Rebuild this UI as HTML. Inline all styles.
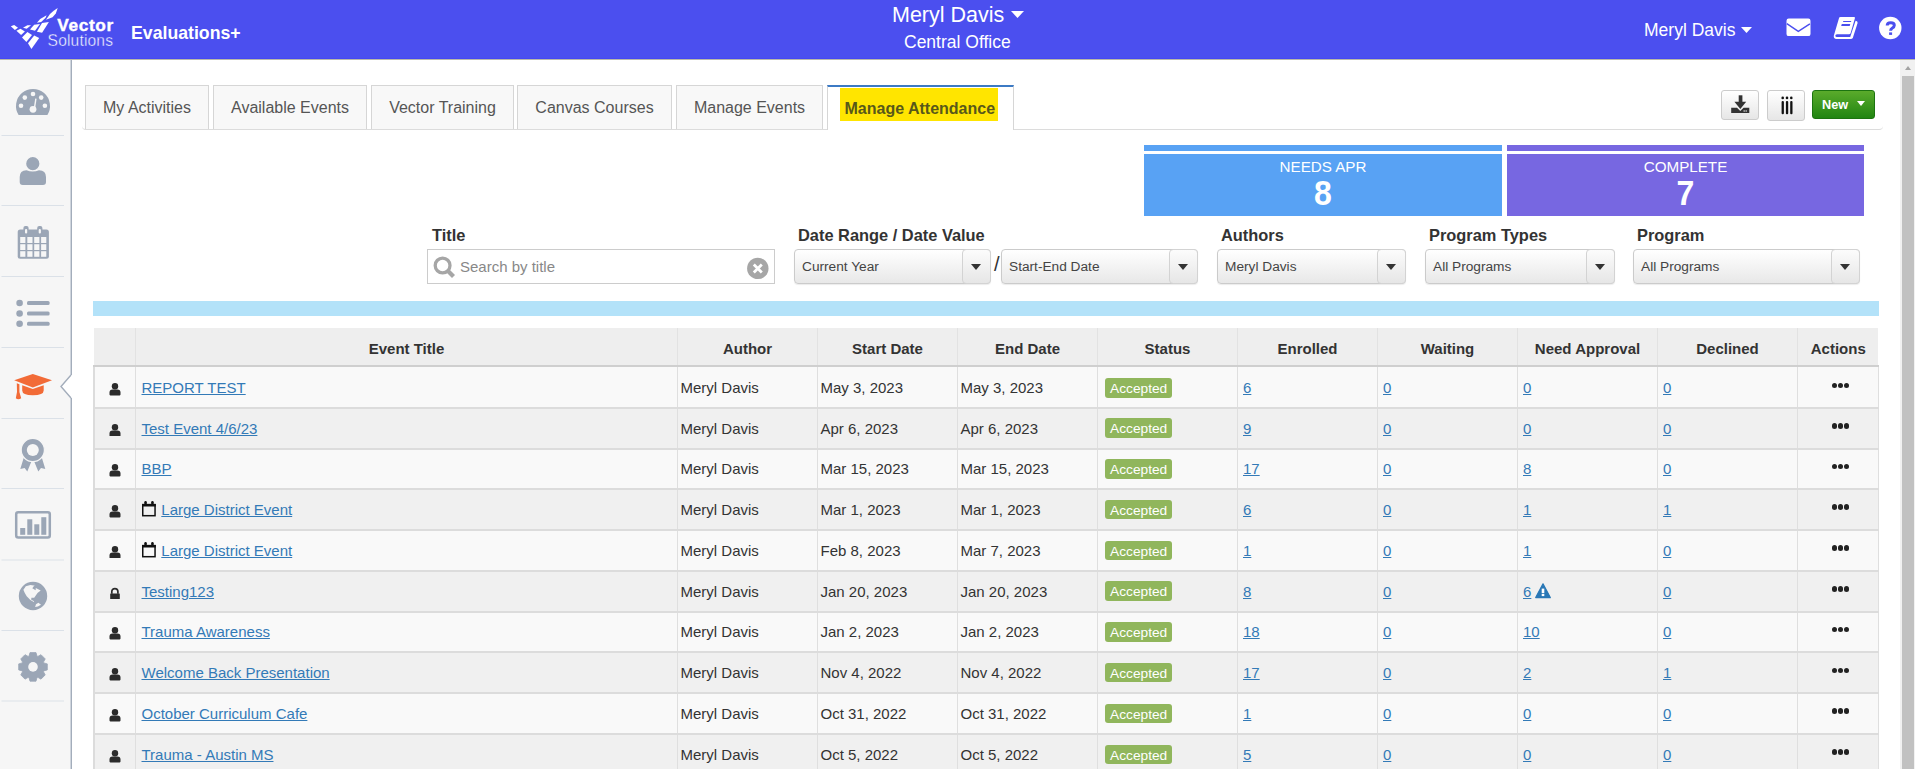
<!DOCTYPE html>
<html><head><meta charset="utf-8">
<style>
*{box-sizing:border-box;margin:0;padding:0}
html,body{width:1915px;height:769px;overflow:hidden;background:#fff;font-family:"Liberation Sans",sans-serif;color:#333}
#hdr{position:absolute;left:0;top:0;width:1915px;height:60px;background:#4b4fef;color:#fff;box-shadow:inset 0 -1px 0 #b9b8aa,inset 0 -2px 0 #4447f5}
#hdr .app{position:absolute;left:131px;top:23.3px;font-size:17.7px;font-weight:bold;white-space:nowrap}
#hdr .cu{position:absolute;left:892px;top:3px;font-size:21.5px;white-space:nowrap}
#hdr .co{position:absolute;left:904px;top:32px;font-size:17.5px;white-space:nowrap}
#hdr .ru{position:absolute;left:1644px;top:20px;font-size:17.5px;white-space:nowrap}
#hdr svg{position:absolute}
#side{position:absolute;left:0;top:60px;width:72px;height:709px;background:#f6f6f6;box-shadow:inset -1px 0 0 #a3adbb,inset -2px 0 0 #cfd5dd}
#side .sep{position:absolute;left:4px;width:60px;height:1px;background:#dde2e8}
#side svg{position:absolute}
#scroll{position:absolute;left:1900px;top:60px;width:15px;height:709px;background:#f1f1f1}
#scroll .thumb{position:absolute;left:2px;top:16px;width:12px;height:693px;background:#c1c1c1}
#scroll .up{position:absolute;left:5px;top:6px;border-left:3px solid transparent;border-right:3px solid transparent;border-bottom:4px solid #a3a3a3}
.tabs{position:absolute;left:82px;top:85px;width:1801px;height:45px;border-bottom:1px solid #dcdcdc;border-bottom-left-radius:4px;border-bottom-right-radius:4px}
.tab{position:absolute;top:0;height:44px;border:1px solid #d6d6d6;border-bottom:none;background:#f8f8f8;font-size:16px;color:#555;padding-top:13px;text-align:center;white-space:nowrap;line-height:18px}
.tab.act{background:#fff;border:1px solid #d6d6d6;border-top:2px solid #3c7ac4;border-bottom:none;height:45px;color:#58581a;font-weight:bold;padding-top:11px}
.tab.act span{position:absolute;left:12px;top:1px;width:158px;height:33px;background:#ffe500;line-height:18px;padding:11.5px 0 0 4.5px;text-align:left}
.btn{position:absolute;top:90px;height:30px;border:1px solid #ccc;border-radius:3px;background:linear-gradient(#fff,#e6e6e6)}
.btn svg{position:absolute}
.new{position:absolute;left:1812px;top:90px;width:63px;height:29px;border-radius:3px;background:linear-gradient(#5aab2b,#218512);border:1px solid #1c7410;color:#fff;font-weight:bold;font-size:12.7px}
.new span{position:absolute;left:9px;top:6.5px}
.new i{position:absolute;left:44px;top:10px;border-left:4.7px solid transparent;border-right:4.7px solid transparent;border-top:5px solid #fff}
.stat{position:absolute;top:145px;height:71px;color:#fff;text-align:center}
.stat .strip{position:absolute;left:0;top:0;width:100%;height:6px}
.stat .body{position:absolute;left:0;top:9px;width:100%;height:62px}
.stat .lbl{position:absolute;left:0;top:4.1px;width:100%;font-size:15.2px}
.stat .num{position:absolute;left:0;top:18.6px;width:100%;font-size:32px;font-weight:bold;transform:scaleY(1.12);transform-origin:50% 7px}
.flbl{position:absolute;top:226px;font-size:16.4px;font-weight:bold;color:#333;white-space:nowrap}
.inp{position:absolute;top:249px;height:35px;border:1px solid #ccc;background:#fff;font-size:15px;color:#888}
.inp svg{position:absolute}
.inp span{position:absolute;left:32px;top:7.6px}
.sel{position:absolute;top:249px;height:35px;border:1px solid #cbcbcb;border-radius:4px;background:linear-gradient(#fff,#e8e8e8);font-size:13.7px;color:#444;white-space:nowrap;box-shadow:0 1px 1px rgba(0,0,0,0.08)}
.sel span{position:absolute;left:7px;top:9px}
.sel .dd{position:absolute;right:-1px;top:-1px;width:29px;height:35px;border:1px solid #d3d3d3;border-radius:4px;background:linear-gradient(#fcfcfc,#e6e6e6)}
.sel .dd:after{content:"";position:absolute;left:7.5px;top:14px;border-left:5.8px solid transparent;border-right:5.8px solid transparent;border-top:6.8px solid #333}
.slash{position:absolute;left:994px;top:252.5px;font-size:20px;color:#333}
.bar{position:absolute;left:93px;top:301px;width:1786px;height:15px;background:#b3e2f9}
table{position:absolute;left:93px;top:328px;border-collapse:collapse;table-layout:fixed;width:1784px;font-size:15px}
th{height:38px;background:#eeeeee;font-weight:bold;color:#333;border-left:1px solid #e2e2e2;border-bottom:2px solid #cfcfcf;text-align:center;padding:3px 0 0 1px}
td{height:40.78px;border:1px solid #dfdfdf;border-top:2px solid #dcdcdc;padding:0 0 0 3px;white-space:nowrap}
td:first-child{border-left:2px solid #dcdcdc}
tr.o td{background:#f9f9f9}
tr.e td{background:#f0f0f0}
td a{color:#337ab7;text-decoration:underline}
.acc{display:inline-block;background:#90b65c;color:#fff;padding:0 5px;border-radius:3px;font-size:13.7px;line-height:19.5px;margin-left:4px}
.acc b{font-weight:normal;position:relative;top:1px;left:0.6px}
td.ic{text-align:center;padding:0}
td.tt{padding-left:6px}
td.ac{text-align:center;padding:0 0 0 6px}
.dots i{display:inline-block;width:5.7px;height:5.7px;border-radius:50%;background:#222;margin:0 0.1px;vertical-align:5px}
tr.r1 td{height:41.78px;padding-top:2px}
td.n{padding-left:5.5px}
tr.r1 td.ic{padding-top:2px}
.ri{display:block;margin-left:auto;margin-right:auto}

</style></head><body>
<div id="hdr">
  <svg style="left:0;top:0" width="130" height="59" viewBox="0 0 130 59">
    <g fill="#fff">
      <polygon points="10.8,26.2 14.2,24.9 18,27.7 14.9,29.9"/>
      <polygon points="16.4,30.8 20.5,28.7 24.9,31.5 21.1,34.9"/>
      <polygon points="22,37.4 27.4,32.1 32,34.9 26.4,42.1"/>
      <polygon points="28,43.3 34.2,35.5 39.2,38 31.4,48.9"/>
      <polygon points="23,27.7 27.4,25.2 31.1,25.2 26.7,28.7"/>
      <polygon points="30,29.4 34.2,24.8 40,24 35,30.8"/>
      <polygon points="36.9,31.7 42,23.1 48.9,22.1 42.1,32.7"/>
      <polygon points="36.9,22.7 40.2,18.9 46.6,15.2 45.6,17.8 41.2,22"/>
      <polygon points="46,19.8 50,14 53.7,10.7 57.7,8 55.8,13.6 52.5,17.3"/>
    </g>
    <text x="57.3" y="30.8" fill="#fff" stroke="#fff" stroke-width="0.4" font-family="Liberation Sans" font-weight="bold" font-size="17.3" letter-spacing="0.6">Vector</text>
    <text x="47.6" y="45.8" fill="#fff" stroke="#4b4fef" stroke-width="0.4" font-family="Liberation Sans" font-size="15.6" letter-spacing="0.15">Solutions</text>
  </svg>
  <div class="app">Evaluations+</div>
  <div class="cu">Meryl Davis</div>
  <svg style="left:1011px;top:11px" width="13" height="7" viewBox="0 0 13 7"><path d="M0 0H13L6.5 7Z" fill="#fff"/></svg>
  <div class="co">Central Office</div>
  <div class="ru">Meryl Davis</div>
  <svg style="left:1741px;top:27px" width="11" height="6" viewBox="0 0 11 6"><path d="M0 0H11L5.5 6Z" fill="#fff"/></svg>
  <svg style="left:1786px;top:18px" width="25" height="19" viewBox="0 0 25 19">
    <rect x="0.5" y="0.5" width="24" height="17.6" rx="2.2" fill="#fff"/>
    <path d="M0.8 5.6 L12.3 13.4 L23.9 5.8" stroke="#4b4fef" stroke-width="1.4" fill="none"/>
  </svg>
  <svg style="left:1833px;top:16px" width="26" height="24" viewBox="0 0 26 24">
    <path d="M6.2 1.6 Q6.6 0.9 7.5 0.9 H21 Q22.3 0.9 21.9 2.3 L17.6 17.2 Q17.2 18.3 16 18.3 H4 Q2.4 18.5 2.3 19.8 Q2.4 21 3.9 21 H17.2 L22.6 4.8 Q24.9 5.2 24.6 7 L19.8 22 Q19.2 23 17.8 23 H3.4 Q0.4 22.8 0.8 19.8 Z" fill="#fff"/>
    <path d="M10.3 4.9 H18.3 L18 6.1 H10 Z M8.8 7.9 H17.3 L16.7 10 H8.2 Z" fill="#4b4fef"/>
  </svg>
  <svg style="left:1878px;top:16px" width="25" height="25" viewBox="0 0 25 25">
    <circle cx="12.3" cy="12" r="11.2" fill="#fff"/>
    <path d="M9.2 9.6 Q9.2 6.7 12.8 6.7 Q16.3 6.7 16.3 9.3 Q16.3 11 14.4 12 Q12.6 13 12.6 14.8" stroke="#4b4fef" stroke-width="3" fill="none"/>
    <rect x="11.1" y="16.4" width="3" height="2.5" fill="#4b4fef"/>
  </svg>
</div>
<div id="side">
  <svg style="left:0;top:0" width="72" height="709" viewBox="0 60 72 709">
    <g fill="#9ba6b6">
      <path d="M18.6 115 A17 17 0 1 1 47.4 115 Z"/>
      <circle cx="32.8" cy="163.7" r="7.3" stroke="#f6f6f6" stroke-width="1.4"/>
      <path d="M19.7 182 V177 Q19.7 170.5 26.5 170.2 Q32.8 173 39 170.2 Q46 170.5 46 177 V182 Q46 185 43 185 H22.7 Q19.7 185 19.7 182Z"/>
      <rect x="17.7" y="229.5" width="31.2" height="29.3" rx="2.5"/>
      <rect x="23.4" y="226" width="5.2" height="9" rx="2"/>
      <rect x="37.2" y="226" width="5.2" height="9" rx="2"/>
      <circle cx="19.6" cy="303" r="3.3"/><circle cx="19.6" cy="313.5" r="3.3"/><circle cx="19.6" cy="323.7" r="3.3"/>
      <rect x="27" y="301" width="22.6" height="4" rx="1.5"/><rect x="27" y="311.5" width="22.6" height="4" rx="1.5"/><rect x="27" y="321.7" width="22.6" height="4" rx="1.5"/>
      <path d="M23.8 457.5 L31.3 461.8 L27.3 471.5 L24.6 468 L20.3 469 Z"/>
      <path d="M41.8 457.5 L34.3 461.8 L38.3 471.5 L41 468 L45.3 469 Z"/>
      <circle cx="32.8" cy="450" r="11.6" stroke="#f6f6f6" stroke-width="1.2"/>
      <rect x="16.2" y="512.2" width="33.6" height="25.4" rx="2" fill="none" stroke="#9ba6b6" stroke-width="2.5"/>
      <rect x="20.2" y="528" width="5" height="6.8"/><rect x="27.3" y="519.3" width="5" height="15.5"/><rect x="34.3" y="524.3" width="5" height="10.5"/><rect x="41.3" y="517.2" width="5" height="17.6"/>
      <circle cx="33" cy="596" r="14.2"/>
      <path d="M43.80 662.90 L47.30 663.90 L47.30 669.90 L43.80 670.90 L43.47 671.71 L45.23 674.89 L40.99 679.13 L37.81 677.37 L37.00 677.70 L36.00 681.20 L30.00 681.20 L29.00 677.70 L28.19 677.37 L25.01 679.13 L20.77 674.89 L22.53 671.71 L22.20 670.90 L18.70 669.90 L18.70 663.90 L22.20 662.90 L22.53 662.09 L20.77 658.91 L25.01 654.67 L28.19 656.43 L29.00 656.10 L30.00 652.60 L36.00 652.60 L37.00 656.10 L37.81 656.43 L40.99 654.67 L45.23 658.91 L43.47 662.09Z" stroke="#9ba6b6" stroke-width="0.8" stroke-linejoin="round"/>
    </g>
    <g fill="#f6f6f6">
      <circle cx="21" cy="105.8" r="2.3"/><circle cx="24.8" cy="97.6" r="2.3"/><circle cx="33" cy="94" r="2.3"/><circle cx="41.2" cy="97.6" r="2.3"/><circle cx="44.9" cy="105.8" r="2.3"/>
      <circle cx="33" cy="109.3" r="3.4"/>
      <path d="M33.6 109 L35.2 98.5 L36.6 98.7 L35 109.3Z"/>
      <rect x="25" y="229" width="2.2" height="4.5" rx="1"/><rect x="38.7" y="229" width="2.2" height="4.5" rx="1"/>
      <rect x="20.2" y="237" width="5.2" height="6"/><rect x="27.3" y="237" width="5.2" height="6"/><rect x="34.2" y="237" width="5.2" height="6"/><rect x="41.1" y="237" width="5.2" height="6"/>
      <rect x="20.2" y="244.2" width="5.2" height="5.8"/><rect x="27.3" y="244.2" width="5.2" height="5.8"/><rect x="34.2" y="244.2" width="5.2" height="5.8"/><rect x="41.1" y="244.2" width="5.2" height="5.8"/>
      <rect x="20.2" y="251.2" width="5.2" height="5.6"/><rect x="27.3" y="251.2" width="5.2" height="5.6"/><rect x="34.2" y="251.2" width="5.2" height="5.6"/><rect x="41.1" y="251.2" width="5.2" height="5.6"/>
      <circle cx="32.8" cy="450" r="6"/>
      <path d="M23.4 589.7 L25.8 586.2 L30.4 585 L33.7 585.5 L34.7 585 L32.3 588.3 L35.6 590.2 L35.8 588 L40.7 590.4 L37.5 593 L35.6 595.8 L34.2 597.7 L31.4 597.7 L31.2 599.8 L33.7 600.9 L34.2 602.3 L30.4 600 L26.7 596.3 L24.8 593 L23.9 591.1 Z"/>
      <path d="M35.1 607 L36 604.2 L38.4 602.8 L41 604.7 L37.9 606.6 Z"/>
      <circle cx="33" cy="666.9" r="4.8"/>
    </g>
    <g fill="#f26b37">
      <path d="M14.2 380.3 L32.8 373.9 L52 380.3 L32.8 387.5 Z"/>
      <path d="M22.2 385.2 L32.8 389 L43.7 385.2 V390.5 Q43.7 395.2 32.8 395.2 Q22.2 395.2 22.2 390.5 Z"/>
      <path d="M16.8 383.3 L19.4 384.2 V392 L21.2 398.2 Q18.2 400.2 15.8 398.2 L17 392 Z"/>
    </g>
    <g fill="#dbe1e8">
      <rect x="1.5" y="135" width="62.5" height="1"/><rect x="1.5" y="205" width="62.5" height="1"/><rect x="1.5" y="276" width="62.5" height="1"/><rect x="1.5" y="347" width="62.5" height="1"/><rect x="1.5" y="418" width="62.5" height="1"/><rect x="1.5" y="488" width="62.5" height="1"/><rect x="1.5" y="559.5" width="62.5" height="1"/><rect x="1.5" y="630" width="62.5" height="1"/><rect x="1.5" y="700.5" width="62.5" height="1"/>
    </g>
    <path d="M72 375 L71 375 L61 386.5 L71 398 L72 398 Z" fill="#fff"/>
    <path d="M71 375 L61 386.5 L71 398" fill="none" stroke="#a3adbb" stroke-width="1.4"/>
  </svg>
</div>
<div id="scroll"><div class="up"></div><div class="thumb"></div></div>
<div class="tabs">
  <div class="tab" style="left:3px;width:124px">My Activities</div>
  <div class="tab" style="left:131px;width:154px">Available Events</div>
  <div class="tab" style="left:289px;width:143px">Vector Training</div>
  <div class="tab" style="left:435px;width:155px">Canvas Courses</div>
  <div class="tab" style="left:594px;width:147px">Manage Events</div>
  <div class="tab act" style="left:745px;width:187px"><span>Manage Attendance</span></div>
</div>
<div class="btn" style="left:1721px;width:38px;height:30px">
  <svg style="left:8px;top:3px" width="20" height="20" viewBox="1730 94 20 20">
    <rect x="1738.7" y="95.3" width="3.7" height="8" fill="#333"/>
    <path d="M1734.4 101.8 H1746.2 L1740.3 109.1 Z" fill="#333"/>
    <path d="M1731.2 107.8 H1737 L1740.3 111 L1743.6 107.8 H1749.3 V113 H1731.2 Z" fill="#333"/>
    <rect x="1743.5" y="110.5" width="1.4" height="1" fill="#fff"/><rect x="1745.5" y="110.5" width="1.4" height="1" fill="#fff"/>
  </svg>
</div>
<div class="btn" style="left:1767px;width:38px;height:31px">
  <svg style="left:12px;top:5px" width="14" height="21" viewBox="1780 96 14 21">
    <g fill="#111"><circle cx="1782.7" cy="97.9" r="1.3"/><circle cx="1787" cy="97.9" r="1.3"/><circle cx="1791.3" cy="97.9" r="1.3"/>
    <rect x="1781.6" y="101" width="2.3" height="13.3" rx="1"/><rect x="1785.9" y="101" width="2.3" height="13.3" rx="1"/><rect x="1790.2" y="101" width="2.3" height="13.3" rx="1"/></g>
  </svg>
</div>
<div class="new"><span>New</span><i></i></div>
<div class="stat" style="left:1144px;width:358px"><div class="strip" style="background:#58a2f4"></div><div class="body" style="background:#58a2f4"><div class="lbl">NEEDS APR</div><div class="num">8</div></div></div>
<div class="stat" style="left:1507px;width:357px"><div class="strip" style="background:#7767e1"></div><div class="body" style="background:#7767e1"><div class="lbl">COMPLETE</div><div class="num">7</div></div></div>
<div class="flbl" style="left:432px">Title</div>
<div class="flbl" style="left:798px">Date Range / Date Value</div>
<div class="flbl" style="left:1221px">Authors</div>
<div class="flbl" style="left:1429px">Program Types</div>
<div class="flbl" style="left:1637px">Program</div>
<div class="inp" style="left:427px;width:348px">
  <svg style="left:4.2px;top:3.1px" width="26" height="26" viewBox="432 253 26 26">
    <circle cx="442.6" cy="265.5" r="7.4" fill="none" stroke="#a6a6a6" stroke-width="3.3"/>
    <path d="M448 271 L453.5 276.5" stroke="#a6a6a6" stroke-width="4.2"/>
  </svg>
  <span>Search by title</span>
  <svg style="left:318px;top:7px" width="23" height="23" viewBox="746 256 23 23">
    <circle cx="757.8" cy="267.4" r="10.7" fill="#a6a6a6"/>
    <path d="M753.8 263.4 L761.8 271.4 M761.8 263.4 L753.8 271.4" stroke="#fff" stroke-width="2.8"/>
  </svg>
</div>
<div class="sel" style="left:794px;width:197px"><span>Current Year</span><div class="dd"></div></div>
<div class="slash">/</div>
<div class="sel" style="left:1001px;width:197px"><span>Start-End Date</span><div class="dd"></div></div>
<div class="sel" style="left:1217px;width:189px"><span>Meryl Davis</span><div class="dd"></div></div>
<div class="sel" style="left:1425px;width:190px"><span>All Programs</span><div class="dd"></div></div>
<div class="sel" style="left:1633px;width:227px"><span>All Programs</span><div class="dd"></div></div>
<div class="bar"></div>
<table>
<colgroup><col style="width:41px"><col style="width:542px"><col style="width:140px"><col style="width:140px"><col style="width:140px"><col style="width:140px"><col style="width:140px"><col style="width:140px"><col style="width:140px"><col style="width:140px"><col style="width:81px"></colgroup>
<tr><th style="border-left:none"></th><th>Event Title</th><th>Author</th><th>Start Date</th><th>End Date</th><th>Status</th><th>Enrolled</th><th>Waiting</th><th>Need Approval</th><th>Declined</th><th>Actions</th></tr>
<tr class="o r1"><td class="ic"><svg class="ri" width="12" height="12.5" viewBox="0 0 12 12.5" style="margin-top:3.5px"><circle cx="6" cy="3.3" r="3.2" fill="#2b2b2b"/><path d="M0.5 11.6 V9.6 Q0.5 6.5 3.6 6.5 H8.4 Q11.5 6.5 11.5 9.6 V11.6 Q11.5 12.4 10.7 12.4 H1.3 Q0.5 12.4 0.5 11.6 Z" fill="#2b2b2b"/></svg></td><td class="tt"><a>REPORT TEST</a></td><td>Meryl Davis</td><td>May 3, 2023</td><td>May 3, 2023</td><td><span class="acc"><b>Accepted</b></span></td><td class="n"><a>6</a></td><td class="n"><a>0</a></td><td class="n"><a>0</a></td><td class="n"><a>0</a></td><td class="ac"><span class="dots"><i></i><i></i><i></i></span></td></tr>
<tr class="e"><td class="ic"><svg class="ri" width="12" height="12.5" viewBox="0 0 12 12.5" style="margin-top:3.5px"><circle cx="6" cy="3.3" r="3.2" fill="#2b2b2b"/><path d="M0.5 11.6 V9.6 Q0.5 6.5 3.6 6.5 H8.4 Q11.5 6.5 11.5 9.6 V11.6 Q11.5 12.4 10.7 12.4 H1.3 Q0.5 12.4 0.5 11.6 Z" fill="#2b2b2b"/></svg></td><td class="tt"><a>Test Event 4/6/23</a></td><td>Meryl Davis</td><td>Apr 6, 2023</td><td>Apr 6, 2023</td><td><span class="acc"><b>Accepted</b></span></td><td class="n"><a>9</a></td><td class="n"><a>0</a></td><td class="n"><a>0</a></td><td class="n"><a>0</a></td><td class="ac"><span class="dots"><i></i><i></i><i></i></span></td></tr>
<tr class="o"><td class="ic"><svg class="ri" width="12" height="12.5" viewBox="0 0 12 12.5" style="margin-top:3.5px"><circle cx="6" cy="3.3" r="3.2" fill="#2b2b2b"/><path d="M0.5 11.6 V9.6 Q0.5 6.5 3.6 6.5 H8.4 Q11.5 6.5 11.5 9.6 V11.6 Q11.5 12.4 10.7 12.4 H1.3 Q0.5 12.4 0.5 11.6 Z" fill="#2b2b2b"/></svg></td><td class="tt"><a>BBP</a></td><td>Meryl Davis</td><td>Mar 15, 2023</td><td>Mar 15, 2023</td><td><span class="acc"><b>Accepted</b></span></td><td class="n"><a>17</a></td><td class="n"><a>0</a></td><td class="n"><a>8</a></td><td class="n"><a>0</a></td><td class="ac"><span class="dots"><i></i><i></i><i></i></span></td></tr>
<tr class="e"><td class="ic"><svg class="ri" width="12" height="12.5" viewBox="0 0 12 12.5" style="margin-top:3.5px"><circle cx="6" cy="3.3" r="3.2" fill="#2b2b2b"/><path d="M0.5 11.6 V9.6 Q0.5 6.5 3.6 6.5 H8.4 Q11.5 6.5 11.5 9.6 V11.6 Q11.5 12.4 10.7 12.4 H1.3 Q0.5 12.4 0.5 11.6 Z" fill="#2b2b2b"/></svg></td><td class="tt"><svg width="14" height="15.5" viewBox="0 0 14 15.5" style="vertical-align:-1.8px;margin:0 5.8px 0 0"><rect x="0.75" y="3.7" width="12.3" height="11" fill="none" stroke="#111" stroke-width="1.5"/><rect x="0" y="2.9" width="13.8" height="2.6" fill="#111"/><rect x="2.3" y="0" width="2.5" height="4.8" rx="1.2" fill="#111"/><rect x="9.2" y="0" width="2.5" height="4.8" rx="1.2" fill="#111"/></svg><a>Large District Event</a></td><td>Meryl Davis</td><td>Mar 1, 2023</td><td>Mar 1, 2023</td><td><span class="acc"><b>Accepted</b></span></td><td class="n"><a>6</a></td><td class="n"><a>0</a></td><td class="n"><a>1</a></td><td class="n"><a>1</a></td><td class="ac"><span class="dots"><i></i><i></i><i></i></span></td></tr>
<tr class="o"><td class="ic"><svg class="ri" width="12" height="12.5" viewBox="0 0 12 12.5" style="margin-top:3.5px"><circle cx="6" cy="3.3" r="3.2" fill="#2b2b2b"/><path d="M0.5 11.6 V9.6 Q0.5 6.5 3.6 6.5 H8.4 Q11.5 6.5 11.5 9.6 V11.6 Q11.5 12.4 10.7 12.4 H1.3 Q0.5 12.4 0.5 11.6 Z" fill="#2b2b2b"/></svg></td><td class="tt"><svg width="14" height="15.5" viewBox="0 0 14 15.5" style="vertical-align:-1.8px;margin:0 5.8px 0 0"><rect x="0.75" y="3.7" width="12.3" height="11" fill="none" stroke="#111" stroke-width="1.5"/><rect x="0" y="2.9" width="13.8" height="2.6" fill="#111"/><rect x="2.3" y="0" width="2.5" height="4.8" rx="1.2" fill="#111"/><rect x="9.2" y="0" width="2.5" height="4.8" rx="1.2" fill="#111"/></svg><a>Large District Event</a></td><td>Meryl Davis</td><td>Feb 8, 2023</td><td>Mar 7, 2023</td><td><span class="acc"><b>Accepted</b></span></td><td class="n"><a>1</a></td><td class="n"><a>0</a></td><td class="n"><a>1</a></td><td class="n"><a>0</a></td><td class="ac"><span class="dots"><i></i><i></i><i></i></span></td></tr>
<tr class="e"><td class="ic"><svg class="ri" width="10" height="12.5" viewBox="0 0 10 12.5" style="margin-top:3.5px"><path d="M1.8 6.8 V4.6 A3.05 3.05 0 0 1 7.9 4.6 V6.8" stroke="#2b2b2b" stroke-width="1.7" fill="none"/><rect x="0.2" y="6.4" width="9.6" height="5.9" rx="0.5" fill="#2b2b2b"/></svg></td><td class="tt"><a>Testing123</a></td><td>Meryl Davis</td><td>Jan 20, 2023</td><td>Jan 20, 2023</td><td><span class="acc"><b>Accepted</b></span></td><td class="n"><a>8</a></td><td class="n"><a>0</a></td><td class="n"><a>6</a><span style="display:inline-block;position:relative;width:20px;height:1px"><svg width="16" height="15.5" viewBox="0 0 16 15.5" style="position:absolute;left:4px;top:-12.3px"><path d="M8 0.8 L15.3 14.6 H0.7 Z" fill="#2a78b6" stroke="#2a78b6" stroke-linejoin="round" stroke-width="1.2"/><rect x="6.7" y="5.6" width="2.6" height="4.6" fill="#fff"/><rect x="6.7" y="11" width="2.6" height="2.1" fill="#fff"/></svg></span></td><td class="n"><a>0</a></td><td class="ac"><span class="dots"><i></i><i></i><i></i></span></td></tr>
<tr class="o"><td class="ic"><svg class="ri" width="12" height="12.5" viewBox="0 0 12 12.5" style="margin-top:3.5px"><circle cx="6" cy="3.3" r="3.2" fill="#2b2b2b"/><path d="M0.5 11.6 V9.6 Q0.5 6.5 3.6 6.5 H8.4 Q11.5 6.5 11.5 9.6 V11.6 Q11.5 12.4 10.7 12.4 H1.3 Q0.5 12.4 0.5 11.6 Z" fill="#2b2b2b"/></svg></td><td class="tt"><a>Trauma Awareness</a></td><td>Meryl Davis</td><td>Jan 2, 2023</td><td>Jan 2, 2023</td><td><span class="acc"><b>Accepted</b></span></td><td class="n"><a>18</a></td><td class="n"><a>0</a></td><td class="n"><a>10</a></td><td class="n"><a>0</a></td><td class="ac"><span class="dots"><i></i><i></i><i></i></span></td></tr>
<tr class="e"><td class="ic"><svg class="ri" width="12" height="12.5" viewBox="0 0 12 12.5" style="margin-top:3.5px"><circle cx="6" cy="3.3" r="3.2" fill="#2b2b2b"/><path d="M0.5 11.6 V9.6 Q0.5 6.5 3.6 6.5 H8.4 Q11.5 6.5 11.5 9.6 V11.6 Q11.5 12.4 10.7 12.4 H1.3 Q0.5 12.4 0.5 11.6 Z" fill="#2b2b2b"/></svg></td><td class="tt"><a>Welcome Back Presentation</a></td><td>Meryl Davis</td><td>Nov 4, 2022</td><td>Nov 4, 2022</td><td><span class="acc"><b>Accepted</b></span></td><td class="n"><a>17</a></td><td class="n"><a>0</a></td><td class="n"><a>2</a></td><td class="n"><a>1</a></td><td class="ac"><span class="dots"><i></i><i></i><i></i></span></td></tr>
<tr class="o"><td class="ic"><svg class="ri" width="12" height="12.5" viewBox="0 0 12 12.5" style="margin-top:3.5px"><circle cx="6" cy="3.3" r="3.2" fill="#2b2b2b"/><path d="M0.5 11.6 V9.6 Q0.5 6.5 3.6 6.5 H8.4 Q11.5 6.5 11.5 9.6 V11.6 Q11.5 12.4 10.7 12.4 H1.3 Q0.5 12.4 0.5 11.6 Z" fill="#2b2b2b"/></svg></td><td class="tt"><a>October Curriculum Cafe</a></td><td>Meryl Davis</td><td>Oct 31, 2022</td><td>Oct 31, 2022</td><td><span class="acc"><b>Accepted</b></span></td><td class="n"><a>1</a></td><td class="n"><a>0</a></td><td class="n"><a>0</a></td><td class="n"><a>0</a></td><td class="ac"><span class="dots"><i></i><i></i><i></i></span></td></tr>
<tr class="e"><td class="ic"><svg class="ri" width="12" height="12.5" viewBox="0 0 12 12.5" style="margin-top:3.5px"><circle cx="6" cy="3.3" r="3.2" fill="#2b2b2b"/><path d="M0.5 11.6 V9.6 Q0.5 6.5 3.6 6.5 H8.4 Q11.5 6.5 11.5 9.6 V11.6 Q11.5 12.4 10.7 12.4 H1.3 Q0.5 12.4 0.5 11.6 Z" fill="#2b2b2b"/></svg></td><td class="tt"><a>Trauma - Austin MS</a></td><td>Meryl Davis</td><td>Oct 5, 2022</td><td>Oct 5, 2022</td><td><span class="acc"><b>Accepted</b></span></td><td class="n"><a>5</a></td><td class="n"><a>0</a></td><td class="n"><a>0</a></td><td class="n"><a>0</a></td><td class="ac"><span class="dots"><i></i><i></i><i></i></span></td></tr>
</table>

</body></html>
